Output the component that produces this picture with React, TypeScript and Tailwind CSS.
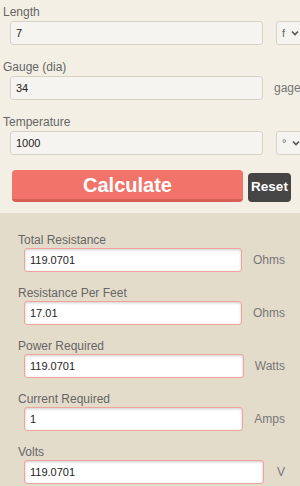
const inputs = [
  { label: "Length", value: "7", unit: "select", opt: "f" },
  { label: "Gauge (dia)", value: "34", unit: "text", opt: "gage" },
  { label: "Temperature", value: "1000", unit: "select", opt: "°" },
];

const results = [
  { label: "Total Resistance", value: "119.0701", unit: "Ohms" },
  { label: "Resistance Per Feet", value: "17.01", unit: "Ohms" },
  { label: "Power Required", value: "119.0701", unit: "Watts" },
  { label: "Current Required", value: "1", unit: "Amps" },
  { label: "Volts", value: "119.0701", unit: "V" },
];

const Chevron = () => (
  <svg width="8" height="6" viewBox="0 0 8 6" className="shrink-0">
    <path d="M1 1.5 L4 4.5 L7 1.5" fill="none" stroke="#555" strokeWidth="1.6" />
  </svg>
);

const App = () => {
  return (
    <div className="w-[300px] h-[486px] overflow-hidden font-['Liberation_Sans',Arial,sans-serif]">
      {/* Input section */}
      <div className="bg-[#f3efe4] pt-[5px] pb-[11px]">
        {inputs.map((row) => (
          <div key={row.label} className="mb-[15px] last:mb-[16px]">
            <div className="pl-[3px] h-[14px] leading-[14px] text-[12px] text-[#666]">{row.label}</div>
            <div className="mt-[2px] flex items-center">
              <div className="ml-[10px] w-[253px] h-6 shrink-0 rounded-[3px] border border-[#d8d2c6] bg-[#f6f4f0] px-[5px] flex items-center text-[11px] text-[#222]">
                {row.value}
              </div>
              {row.unit === "select" ? (
                <div className="ml-[13px] w-[30px] h-6 shrink-0 rounded-[3px] border border-[#d8d2c6] bg-[#f6f4f0] flex items-center gap-[6px] pl-[5px] text-[11px] text-[#666]">
                  <span>{row.opt}</span>
                  <Chevron />
                </div>
              ) : (
                <span className="ml-[11px] text-[12px] text-[#777]">{row.opt}</span>
              )}
            </div>
          </div>
        ))}

        {/* Buttons */}
        <div className="flex items-end">
          <button className="ml-[12px] w-[231px] h-[32px] rounded-[4px] bg-[#f2736a] border-b-[3px] border-[#d55f57] text-white font-bold text-[20px] leading-none">
            Calculate
          </button>
          <button className="ml-[5px] w-[43px] h-[29px] rounded-[4px] bg-[#454545] text-white font-bold text-[13.5px] leading-none pb-[2px]">
            Reset
          </button>
        </div>
      </div>

      {/* Results section */}
      <div className="bg-[#e4dccb] pt-[20px] pl-[18px] pr-[15px] h-full">
        {results.map((row) => (
          <div key={row.label} className="mb-[14px]">
            <div className="h-[14px] leading-[14px] text-[12px] text-[#666]">{row.label}</div>
            <div className="mt-[1px] flex items-center">
              <div className="ml-[6px] flex-1 h-6 rounded-[3px] border border-[#f0a29b] bg-white shadow-[inset_0_1px_3px_rgba(0,0,0,0.2)] px-[5px] flex items-center text-[11px] text-[#222]">
                {row.value}
              </div>
              <span className={`${row.unit === "V" ? "ml-[13px]" : "ml-[11px]"} text-[12px] text-[#777]`}>{row.unit}</span>
            </div>
          </div>
        ))}
      </div>
    </div>
  );
};

export default App;
